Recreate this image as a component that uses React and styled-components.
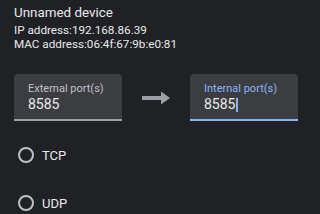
import React from "react";
import styled, { createGlobalStyle } from "styled-components";

const GlobalStyle = createGlobalStyle`
  body {
    margin: 0;
    background: #202124;
    font-family: Roboto, "Liberation Sans", sans-serif;
    color: #e8eaed;
  }
`;

const App = () => {
  return (
    <Page>
      <GlobalStyle />
      <Header>
        <Title>Unnamed device</Title>
        <Info>IP address:192.168.86.39</Info>
        <Info>MAC address:06:4f:67:9b:e0:81</Info>
      </Header>

      <PortRow>
        <Field>
          <Label>External port(s)</Label>
          <Value>8585</Value>
        </Field>
        <Arrow width="28" height="14" viewBox="0 0 28 14">
          <rect x="0" y="5" width="20" height="4" fill="#9aa0a6" />
          <polygon points="19,0.5 28,7 19,13.5" fill="#9aa0a6" />
        </Arrow>
        <Field focused>
          <Label focused>Internal port(s)</Label>
          <Value>
            8585
            <Caret />
          </Value>
        </Field>
      </PortRow>

      <Radios>
        <RadioRow>
          <Circle />
          <RadioLabel>TCP</RadioLabel>
        </RadioRow>
        <RadioRow>
          <Circle />
          <RadioLabel>UDP</RadioLabel>
        </RadioRow>
      </Radios>
    </Page>
  );
};

export default App;

const Page = styled.div`
  width: 320px;
  height: 214px;
  overflow: hidden;
`;

const Header = styled.div`
  padding: 4px 14px 0;
  display: flex;
  flex-direction: column;
`;

const Title = styled.div`
  font-size: 13.4px;
  line-height: 18px;
  margin-bottom: 1px;
`;

const Info = styled.div`
  font-size: 11.7px;
  line-height: 14px;
`;

const PortRow = styled.div`
  display: flex;
  align-items: center;
  gap: 20px;
  padding-left: 14px;
  margin-top: 23px;
`;

const Field = styled.div`
  width: 108px;
  box-sizing: border-box;
  height: 47px;
  background: #3c3d40;
  border-radius: 4px 4px 0 0;
  border-bottom: 2px solid ${({ focused }) => (focused ? "#8ab4f8" : "#9aa0a6")};
  padding: 8px 14px 0;
  display: flex;
  flex-direction: column;
`;

const Label = styled.div`
  font-size: 11px;
  line-height: 13px;
  color: ${({ focused }) => (focused ? "#8ab4f8" : "#bdc1c6")};
`;

const Value = styled.div`
  font-size: 14px;
  line-height: 17px;
  margin-top: 1px;
  color: #e8eaed;
  display: flex;
  align-items: center;
`;

const Caret = styled.span`
  display: inline-block;
  width: 2px;
  height: 14px;
  margin-left: 1px;
  background: #8ab4f8;
`;

const Arrow = styled.svg`
  display: block;
  flex-shrink: 0;
`;

const Radios = styled.div`
  margin-top: 10px;
  padding-left: 18px;
  display: flex;
  flex-direction: column;
`;

const RadioRow = styled.div`
  height: 48px;
  display: flex;
  align-items: center;
  gap: 8px;
`;

const Circle = styled.span`
  width: 16px;
  height: 16px;
  box-sizing: border-box;
  border: 2px solid #bdc1c6;
  border-radius: 50%;
`;

const RadioLabel = styled.span`
  font-size: 13px;
  color: #e8eaed;
`;
